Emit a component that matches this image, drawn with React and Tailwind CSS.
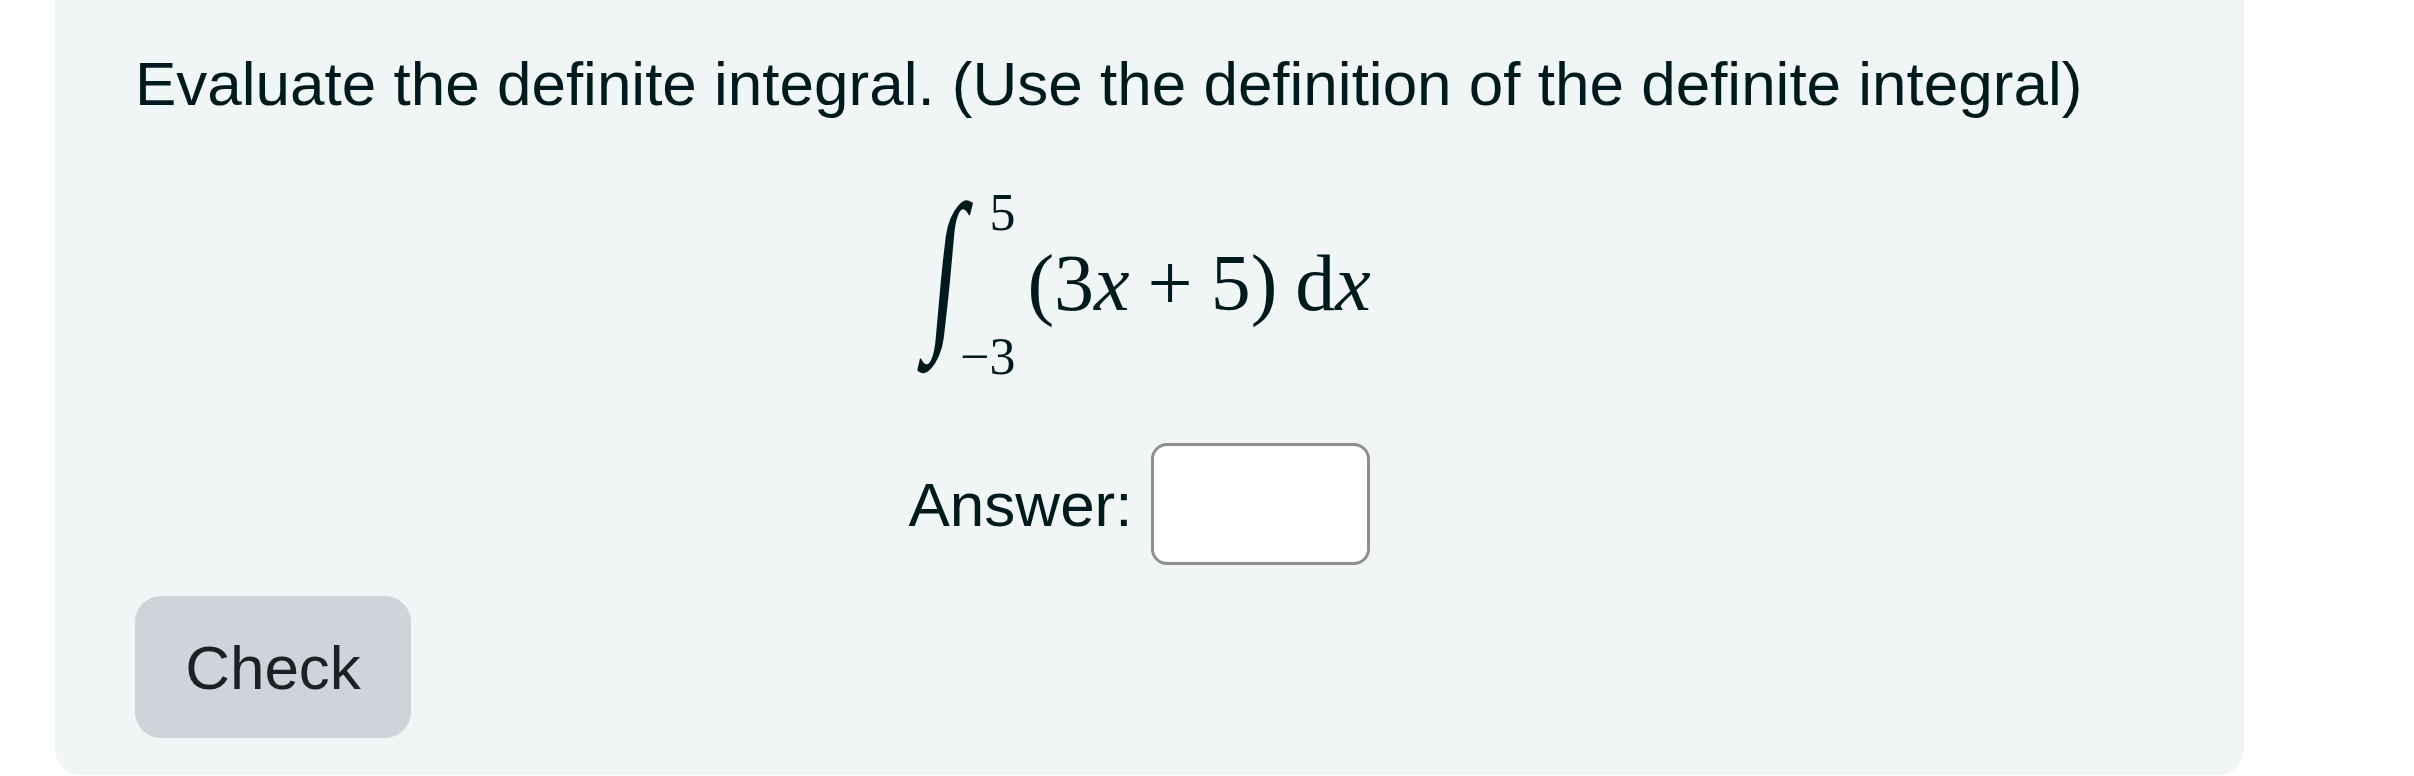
export default function App() {
  return (
    <div className="w-full h-[776px] bg-white overflow-hidden pl-[55px]">
      <div
        className="w-[2189px] h-[775px] bg-[#f0f6f6] rounded-b-[26px] pt-[47px] px-[80px] text-[#001a1e]"
        style={{ fontFamily: '"Liberation Sans", Arial, sans-serif' }}
      >
        <p className="text-[62px] leading-[74px]">
          Evaluate the definite integral. (Use the definition of the definite integral)
        </p>

        {/* displayed formula */}
        <div
          className="mt-[66px] h-[196px] flex justify-center items-start pr-[8px]"
          style={{ fontFamily: '"Liberation Serif", "Times New Roman", serif' }}
        >
          <div className="mt-[23px] w-[66px] h-[162px] flex items-center justify-center overflow-visible">
            <span className="text-[176px] font-bold leading-none inline-block -translate-y-[24px] -translate-x-[6px] -skew-x-[9deg] scale-x-[0.6]">∫</span>
          </div>
          <div className="ml-[-26px] h-[196px] flex flex-col justify-between items-end text-[52px] leading-none">
            <span>5</span>
            <span>−3</span>
          </div>
          <div className="mt-[56px] ml-[12px] flex items-baseline text-[80px] leading-none">
            <span>(</span>
            <span>3</span>
            <span className="italic">x</span>
            <span className="mx-[18px]">+</span>
            <span>5</span>
            <span>)</span>
            <span className="ml-[18px]">d</span>
            <span className="italic">x</span>
          </div>
        </div>

        <div className="mt-[60px] flex justify-center items-center gap-[19px] pr-[20px]">
          <span className="text-[62px]">Answer:</span>
          <input
            type="text"
            className="w-[219px] h-[122px] bg-white border-[3px] border-[#8f8f8f] rounded-[16px] outline-none"
          />
        </div>

        <button className="mt-[31px] w-[276px] h-[142px] bg-[#ced4da] rounded-[26px] text-[62px] text-[#1d2125]">
          Check
        </button>
      </div>
    </div>
  )
}
